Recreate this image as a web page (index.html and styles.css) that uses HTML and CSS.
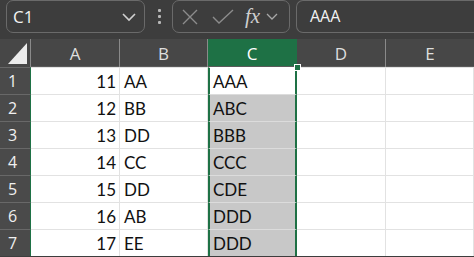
FILE: index.html
```html
<!DOCTYPE html>
<html lang="en">
<head>
  <meta charset="UTF-8" />
  <title>Sheet</title>
  <link rel="stylesheet" href="styles.css">
</head>
<body>

<div class="toolbar">
  <div class="namebox">
    <span>C1</span>
    <svg class="chev" width="16" height="10" viewBox="0 0 16 10"><polyline points="2,2 8,8 14,2" /></svg>
  </div>
  <div class="dots"><i></i><i></i><i></i></div>
  <div class="fbuttons">
    <svg class="ico" width="18" height="18" viewBox="0 0 18 18"><path d="M2 2 L16 16 M16 2 L2 16" /></svg>
    <svg class="ico" width="24" height="18" viewBox="0 0 24 18"><path d="M2 9 L8 15 L22 2" /></svg>
    <span class="fx">fx</span>
    <svg class="chev small" width="14" height="9" viewBox="0 0 14 9"><polyline points="2,2 7,7 12,2" /></svg>
  </div>
  <div class="formula">AAA</div>
</div>

<div class="grid">
  <div class="corner"><div class="tri"></div></div>
  <div class="colhead">A</div>
  <div class="colhead">B</div>
  <div class="colhead active">C</div>
  <div class="colhead">D</div>
  <div class="colhead last">E</div>

  <div class="rowhead">1</div><div class="cell num first">11</div><div class="cell">AA</div><div class="cell sel cur">AAA</div><div class="cell"></div><div class="cell"></div>
  <div class="rowhead">2</div><div class="cell num first">12</div><div class="cell">BB</div><div class="cell sel">ABC</div><div class="cell"></div><div class="cell"></div>
  <div class="rowhead">3</div><div class="cell num first">13</div><div class="cell">DD</div><div class="cell sel">BBB</div><div class="cell"></div><div class="cell"></div>
  <div class="rowhead">4</div><div class="cell num first">14</div><div class="cell">CC</div><div class="cell sel">CCC</div><div class="cell"></div><div class="cell"></div>
  <div class="rowhead">5</div><div class="cell num first">15</div><div class="cell">DD</div><div class="cell sel">CDE</div><div class="cell"></div><div class="cell"></div>
  <div class="rowhead">6</div><div class="cell num first">16</div><div class="cell">AB</div><div class="cell sel">DDD</div><div class="cell"></div><div class="cell"></div>
  <div class="rowhead">7</div><div class="cell num first">17</div><div class="cell">EE</div><div class="cell sel">DDD</div><div class="cell"></div><div class="cell"></div>

  <div class="handle"></div>
</div>

</body>
</html>
```

FILE: styles.css
```css
body {
  margin: 0;
  background: #3d3d3d;
  font-family: "Open Sans", sans-serif;
  width: 474px;
  height: 257px;
  overflow: hidden;
}
.toolbar {
  display: flex;
  align-items: flex-start;
  height: 39px;
  padding-left: 6px;
  background: #3d3d3d;
}
.namebox {
  box-sizing: border-box;
  width: 139px;
  height: 33px;
  border: 1px solid #6a6a6a;
  border-radius: 7px;
  display: flex;
  align-items: center;
  justify-content: space-between;
  padding: 0 7px 0 6px;
  color: #f2f2f2;
  font-size: 17px;
}
.chev polyline {
  fill: none;
  stroke: #d0d0d0;
  stroke-width: 1.6;
}
.chev.small polyline {
  stroke: #a8a8a8;
  stroke-width: 1.3;
}
.dots {
  display: flex;
  flex-direction: column;
  gap: 3px;
  margin: 9px 11px 0 13px;
}
.dots i {
  display: block;
  width: 3px;
  height: 3px;
  background: #b8b8b8;
  border-radius: 1px;
}
.fbuttons {
  box-sizing: border-box;
  width: 118px;
  height: 33px;
  border: 1px solid #6a6a6a;
  border-radius: 7px;
  display: flex;
  align-items: center;
  gap: 12px;
  padding-left: 8px;
}
.fbuttons .ico path {
  fill: none;
  stroke: #8c8c8c;
  stroke-width: 1.4;
}
.fbuttons .fx {
  font-family: "Liberation Serif", serif;
  font-style: italic;
  font-size: 21px;
  color: #cfcfcf;
  margin-left: -2px;
  margin-right: -7px;
  line-height: 1;
}
.formula {
  box-sizing: border-box;
  flex: 1;
  height: 33px;
  margin-left: 6px;
  border: 1px solid #6a6a6a;
  border-right: none;
  border-radius: 7px 0 0 7px;
  color: #f2f2f2;
  font-size: 16px;
  line-height: 31px;
  padding-left: 13px;
}
.grid {
  position: relative;
  display: grid;
  grid-template-columns: 31px 89px 88px 89px 89px 88px;
  grid-template-rows: 28px repeat(7, 27px);
  background: #ffffff;
}
.corner {
  background: #474747;
  border-right: 1px solid #8a8a8a;
  position: relative;
}
.tri {
  position: absolute;
  left: 8px;
  bottom: 3px;
  width: 0;
  height: 0;
  border-left: 19px solid transparent;
  border-bottom: 21px solid #ececec;
}
.colhead {
  background: #474747;
  color: #dedede;
  font-size: 17px;
  display: flex;
  align-items: center;
  justify-content: center;
  border-right: 1px solid #8a8a8a;
  box-shadow: inset 0 -1px 0 #5a5a5a;
}
.colhead.last {
  border-right: none;
}
.colhead.active {
  background: #1e7145;
  color: #ffffff;
  border-right: 1px solid #1e7145;
}
.rowhead {
  background: #4a4a4a;
  color: #f0f0f0;
  font-size: 16px;
  padding-left: 8px;
  display: flex;
  align-items: center;
  border-top: 1px solid #686868;
  border-right: 1px solid #1e7145;
}
.cell {
  box-sizing: border-box;
  font-family: Lato, "Open Sans", sans-serif;
  font-size: 17px;
  color: #111111;
  display: flex;
  align-items: center;
  padding: 0 4px;
  border-top: 1px solid #e2e2e2;
  border-right: 1px solid #e2e2e2;
}
.cell.num {
  justify-content: flex-end;
  padding-right: 3px;
}
.cell.sel {
  background: #c8c8c8;
  border-top-color: #dcdcdc;
  border-left: 2px solid #1e7145;
  border-right: 2px solid #1e7145;
  padding-left: 3px;
}
.cell.sel.cur {
  background: #ffffff;
  border-top-color: #ffffff;
}
.handle {
  position: absolute;
  left: 294px;
  top: 25px;
  width: 5px;
  height: 5px;
  background: #1e7145;
  border: 1px solid #ffffff;
}
```
